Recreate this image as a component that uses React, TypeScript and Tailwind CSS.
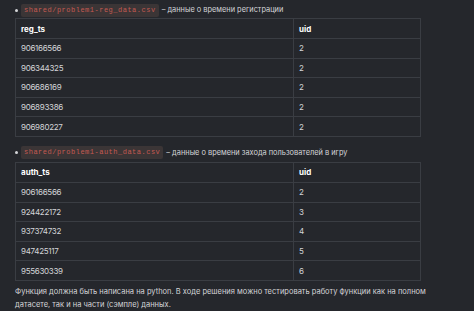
import React from "react";

interface DataTableProps {
  keyName: string;
  rows: [string, string][];
}

function DataTable({ keyName, rows }: DataTableProps) {
  return (
    <table className="w-[406px] border-collapse border border-[#3a3d43] text-[8px] text-[#d4d5d8]">
      <thead>
        <tr className="h-[20px]">
          <th className="w-[278px] border border-[#3a3d43] pl-[5px] text-left font-bold text-white">{keyName}</th>
          <th className="border border-[#3a3d43] pl-[5px] text-left font-bold text-white">uid</th>
        </tr>
      </thead>
      <tbody>
        {rows.map(([ts, uid]) => (
          <tr key={ts} className="h-[19.6px]">
            <td className="border border-[#3a3d43] pl-[5px] tracking-[-0.3px]">{ts}</td>
            <td className="border border-[#3a3d43] pl-[5px]">{uid}</td>
          </tr>
        ))}
      </tbody>
    </table>
  );
}

function FileBullet({ path, text }: { path: string; text: string }) {
  return (
    <div className="flex h-[14px] items-center text-[7.4px] text-[#d4d5d8]">
      <span className="ml-[15px] mr-[3px] h-[3px] w-[3px] rounded-full bg-[#d4d5d8]" />
      <code className="rounded-[2px] bg-[#3b3536] px-[3px] py-[2px] font-['Liberation_Mono','DejaVu_Sans_Mono',monospace] text-[7px] leading-[9px] tracking-[0.5px] text-[#c45a52]">
        {path}
      </code>
      <span className="ml-[3px]">– {text}</span>
    </div>
  );
}

export default function App() {
  return (
    <div className="h-[311px] w-[474px] overflow-hidden bg-[#25272c] pt-[3px] font-['Inter',sans-serif]">
      <FileBullet path="shared/problem1-reg_data.csv" text="данные о времени регистрации" />
      <div className="mt-[1px] pl-[15px]">
        <DataTable
          keyName="reg_ts"
          rows={[
            ["906166566", "2"],
            ["906344325", "2"],
            ["906686169", "2"],
            ["906893386", "2"],
            ["906980227", "2"],
          ]}
        />
      </div>
      <div className="mt-[9px]">
        <FileBullet path="shared/problem1-auth_data.csv" text="данные о времени захода пользователей в игру" />
      </div>
      <div className="mt-[2px] pl-[15px]">
        <DataTable
          keyName="auth_ts"
          rows={[
            ["906166566", "2"],
            ["924422172", "3"],
            ["937374732", "4"],
            ["947425117", "5"],
            ["955630339", "6"],
          ]}
        />
      </div>
      <p className="mt-[4px] pl-[15px] pr-[40px] text-[7.5px] leading-[13px] text-[#d4d5d8]">
        Функция должна быть написана на python. В ходе решения можно тестировать работу функции как на полном датасете, так и на части (сэмпле) данных.
      </p>
    </div>
  );
}
